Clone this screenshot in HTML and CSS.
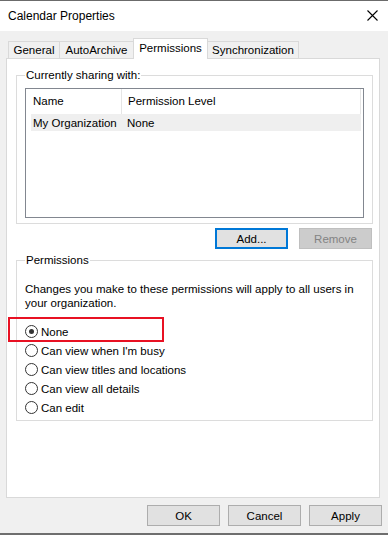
FILE: index.html
```html
<!DOCTYPE html>
<html lang="en">
<head>
    <meta charset="UTF-8">
    <meta name="viewport" content="width=device-width, initial-scale=1.0">
    <title>Calendar Properties</title>
    <link rel="stylesheet" href="styles.css">
</head>
<body>
    <div class="dialog">
        <div class="titlebar">
            <span class="title">Calendar Properties</span>
            <svg class="close" width="11" height="11" viewBox="0 0 11 11">
                <path d="M0.5 0.5 L10.5 10.5 M10.5 0.5 L0.5 10.5" stroke="#000" stroke-width="1.1" fill="none"/>
            </svg>
        </div>

        <div class="tabs">
            <div class="tab tab-general">General</div>
            <div class="tab tab-archive">AutoArchive</div>
            <div class="tab tab-perm active">Permissions</div>
            <div class="tab tab-sync">Synchronization</div>
        </div>

        <div class="panel">
            <fieldset class="group group-sharing">
                <legend>Currently sharing with:</legend>
                <div class="listbox">
                    <div class="list-head">
                        <div class="col col-name">Name</div>
                        <div class="col col-level">Permission Level</div>
                    </div>
                    <div class="list-row">
                        <div class="col col-name">My Organization</div>
                        <div class="col col-level">None</div>
                    </div>
                </div>
            </fieldset>

            <div class="list-actions">
                <button class="btn btn-focus">Add...</button>
                <button class="btn btn-disabled">Remove</button>
            </div>

            <fieldset class="group group-perms">
                <legend>Permissions</legend>
                <p class="note">Changes you make to these permissions will apply to all users in your organization.</p>
                <div class="radios">
                    <label class="radio"><span class="dot checked"></span>None</label>
                    <label class="radio"><span class="dot"></span>Can view when I'm busy</label>
                    <label class="radio"><span class="dot"></span>Can view titles and locations</label>
                    <label class="radio"><span class="dot"></span>Can view all details</label>
                    <label class="radio"><span class="dot"></span>Can edit</label>
                </div>
            </fieldset>
        </div>

        <div class="footer">
            <button class="btn">OK</button>
            <button class="btn">Cancel</button>
            <button class="btn">Apply</button>
        </div>

        <!-- highlight drawn over the dialog -->
        <div class="highlight"></div>
    </div>
</body>
</html>
```

FILE: styles.css
```css
* {
    margin: 0;
    padding: 0;
    box-sizing: border-box;
}

body {
    width: 388px;
    height: 535px;
    overflow: hidden;
    font-family: "Liberation Sans", Arial, sans-serif;
    font-size: 11.5px;
    color: #000;
    background-color: #f0f0f0;
}

.dialog {
    position: relative;
    display: flex;
    flex-direction: column;
    height: 535px;
    border-top: 1px solid #6b6b6b;
    border-bottom: 2px solid #6e6e6e;
}

.titlebar {
    height: 30px;
    display: flex;
    align-items: center;
    justify-content: space-between;
    padding: 0 10px 1px 8px;
    background-color: #fff;
}

.title {
    font-size: 12px;
}

.tabs {
    height: 27px;
    display: flex;
    align-items: flex-end;
    padding-left: 8px;
}

.tab {
    height: 17px;
    line-height: 16px;
    text-align: center;
    border: 1px solid #d9d9d9;
    border-bottom: none;
    margin-left: -1px;
    background-color: #f0f0f0;
}

.tab-general { width: 52px; margin-left: 0; }
.tab-archive { width: 75px; }
.tab-perm { width: 75px; }
.tab-sync { width: 92px; }

.tab.active {
    height: 21px;
    line-height: 18px;
    margin-bottom: -1px;
    position: relative;
    z-index: 1;
    background-color: #fff;
}

.panel {
    width: 374px;
    height: 440px;
    margin-left: 6px;
    padding: 9px 6px 0 9px;
    background-color: #fff;
    border: 1px solid #d9d9d9;
}

.group {
    border: 1px solid #dcdcdc;
    padding: 6px 8px 5px 8px;
}

.group legend {
    padding: 0 1px;
    line-height: 14px;
}

.listbox {
    height: 130px;
    border: 1px solid #828790;
    padding: 0 2px 0 5px;
}

.list-head,
.list-row {
    display: flex;
}

.list-head {
    height: 25px;
    align-items: center;
}

.list-row {
    height: 17px;
    align-items: center;
    background-color: #efefef;
}

.col-name {
    width: 90px;
    padding-left: 2px;
}

.col-level {
    flex: 1;
    padding-left: 6px;
}

.list-head .col {
    height: 25px;
    line-height: 25px;
}

.list-head .col-level {
    border-left: 1px solid #e5e5e5;
    border-right: 1px solid #e5e5e5;
}

.list-actions {
    display: flex;
    justify-content: flex-end;
    gap: 11px;
    padding-right: 1px;
    margin: 4px 0 4px;
}

.btn {
    width: 73px;
    height: 21px;
    font-family: inherit;
    font-size: 11.5px;
    color: #000;
    background-color: #e1e1e1;
    border: 1px solid #adadad;
}

.btn-focus {
    border: 2px solid #0078d7;
}

.btn-disabled {
    color: #838383;
    background-color: #cccccc;
    border-color: #bfbfbf;
}

.group-perms {
    padding: 15px 8px 3px 8px;
}

.note {
    line-height: 14px;
    padding-right: 6px;
}

.radios {
    margin-top: 12px;
}

.radio {
    display: flex;
    align-items: center;
    height: 19px;
    gap: 3px;
}

.dot {
    width: 13px;
    height: 13px;
    border: 1px solid #333;
    border-radius: 50%;
    display: flex;
    align-items: center;
    justify-content: center;
}

.dot.checked::after {
    content: "";
    width: 5px;
    height: 5px;
    border-radius: 50%;
    background-color: #333;
}

.footer {
    display: flex;
    justify-content: flex-end;
    gap: 8px;
    padding: 7px 6px 0 0;
}

.footer .btn {
    height: 21px;
}

.highlight {
    position: absolute;
    left: 8px;
    top: 316px;
    width: 156px;
    height: 25px;
    border: 2px solid #e81123;
}
```
